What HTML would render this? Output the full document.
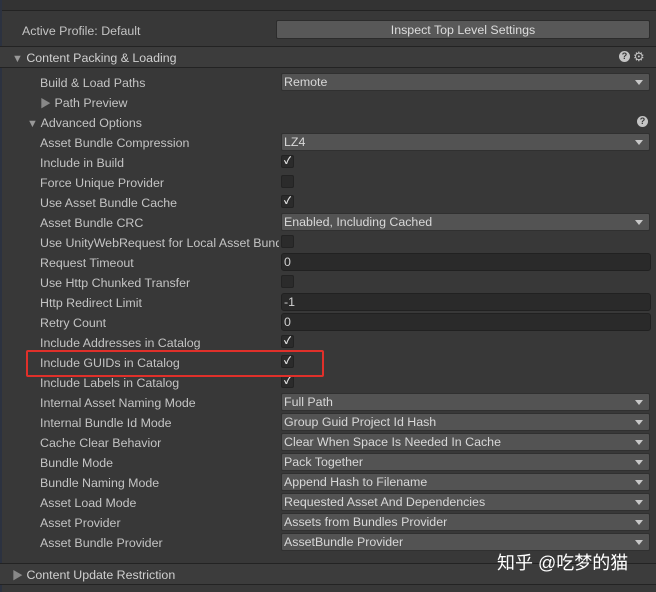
<!DOCTYPE html>
<html><head><meta charset="utf-8"><style>
*{margin:0;padding:0;box-sizing:border-box}
body{width:656px;height:592px;background:#383838;position:relative;overflow:hidden;font-family:"Liberation Sans","Noto Sans CJK SC",sans-serif;font-size:12.4px;color:#c4c4c4}
.a{position:absolute;white-space:nowrap}
.l{position:absolute;left:40px;height:20px;line-height:22px;white-space:nowrap}
.dd{position:absolute;left:281px;width:369px;height:18px;background:#535353;border:1px solid #303030;border-radius:2px;line-height:17px;padding-left:2px;color:#d8d8d8}
.dd:after{content:"";position:absolute;right:6px;top:6px;border-left:4px solid transparent;border-right:4px solid transparent;border-top:5px solid #c8c8c8}
.tf{position:absolute;left:281px;width:370px;height:18px;background:#2a2a2a;border:1px solid #212121;border-radius:3px;line-height:17px;padding-left:2px;color:#d2d2d2}
.cb{position:absolute;left:281px;width:13px;height:13px;background:#2b2b2b;border:1px solid #232323;border-radius:2px;color:#e8e8e8;font-size:10px;font-weight:bold;line-height:12px;text-align:center}
.hr{position:absolute;left:0;width:656px;height:1px;background:#232323}
.q{position:absolute;width:11px;height:11px;border-radius:50%;background:#c4c4c4;color:#383838;font-size:9px;font-weight:bold;line-height:11px;text-align:center}
.ar{font-size:11px;color:#999}
</style></head><body>
<div class="a" style="left:0;top:0;width:656px;height:10px;background:#333"></div>
<div class="hr" style="top:10px"></div>
<div class="a" style="left:0;top:0;width:2px;height:592px;background:#2c3240"></div>
<div class="a" style="left:22px;top:21px;line-height:20px">Active Profile: Default</div>
<div class="a" style="left:276px;top:20px;width:374px;height:19px;background:#585858;border:1px solid #2c2c2c;border-radius:2px;text-align:center;line-height:19px;color:#dcdcdc">Inspect Top Level Settings</div>
<div class="hr" style="top:46px"></div>
<div class="a" style="left:0;top:47px;width:656px;height:20px;background:#3c3c3c"></div>
<div class="a" style="left:12px;top:48px;line-height:20px;color:#d0d0d0"><span class="ar">▼</span> Content Packing &amp; Loading</div>
<div class="q" style="left:619px;top:51px">?</div>
<div class="a" style="left:633px;top:49px;font-size:13px;color:#c4c4c4">⚙</div>
<div class="hr" style="top:67px"></div>

<div class="l" style="top:72px">Build &amp; Load Paths</div><div class="dd" style="top:73px">Remote</div>
<div class="l" style="top:92px;left:40px"><span class="ar" style="color:#888">▶</span> Path Preview</div>
<div class="l" style="top:112px;left:27px"><span class="ar">▼</span> Advanced Options</div>
<div class="q" style="left:637px;top:116px">?</div>
<div class="l" style="top:132px">Asset Bundle Compression</div><div class="dd" style="top:133px">LZ4</div>
<div class="l" style="top:152px">Include in Build</div><div class="cb" style="top:155px">✓</div>
<div class="l" style="top:172px">Force Unique Provider</div><div class="cb" style="top:175px"></div>
<div class="l" style="top:192px">Use Asset Bundle Cache</div><div class="cb" style="top:195px">✓</div>
<div class="l" style="top:212px">Asset Bundle CRC</div><div class="dd" style="top:213px">Enabled, Including Cached</div>
<div class="l" style="top:232px;width:239px;overflow:hidden">Use UnityWebRequest for Local Asset Bundles</div><div class="cb" style="top:235px"></div>
<div class="l" style="top:252px">Request Timeout</div><div class="tf" style="top:253px">0</div>
<div class="l" style="top:272px">Use Http Chunked Transfer</div><div class="cb" style="top:275px"></div>
<div class="l" style="top:292px">Http Redirect Limit</div><div class="tf" style="top:293px">-1</div>
<div class="l" style="top:312px">Retry Count</div><div class="tf" style="top:313px">0</div>
<div class="l" style="top:332px">Include Addresses in Catalog</div><div class="cb" style="top:335px">✓</div>
<div class="l" style="top:352px">Include GUIDs in Catalog</div><div class="cb" style="top:355px">✓</div>
<div class="l" style="top:372px">Include Labels in Catalog</div><div class="cb" style="top:375px">✓</div>
<div class="l" style="top:392px">Internal Asset Naming Mode</div><div class="dd" style="top:393px">Full Path</div>
<div class="l" style="top:412px">Internal Bundle Id Mode</div><div class="dd" style="top:413px">Group Guid Project Id Hash</div>
<div class="l" style="top:432px">Cache Clear Behavior</div><div class="dd" style="top:433px">Clear When Space Is Needed In Cache</div>
<div class="l" style="top:452px">Bundle Mode</div><div class="dd" style="top:453px">Pack Together</div>
<div class="l" style="top:472px">Bundle Naming Mode</div><div class="dd" style="top:473px">Append Hash to Filename</div>
<div class="l" style="top:492px">Asset Load Mode</div><div class="dd" style="top:493px">Requested Asset And Dependencies</div>
<div class="l" style="top:512px">Asset Provider</div><div class="dd" style="top:513px">Assets from Bundles Provider</div>
<div class="l" style="top:532px">Asset Bundle Provider</div><div class="dd" style="top:533px">AssetBundle Provider</div>

<div class="a" style="left:26px;top:350px;width:298px;height:27px;border:2px solid #e0302a;border-radius:2px"></div>

<div class="hr" style="top:563px"></div>
<div class="a" style="left:0;top:564px;width:656px;height:20px;background:#3c3c3c"></div>
<div class="a" style="left:12px;top:565px;line-height:20px;color:#d0d0d0"><span class="ar" style="color:#888">▶</span> Content Update Restriction</div>
<div class="hr" style="top:584px"></div>
<div class="a" style="left:497px;top:551px;font-size:18px;color:#fff;line-height:24px">知乎 @吃梦的猫</div>
</body></html>
